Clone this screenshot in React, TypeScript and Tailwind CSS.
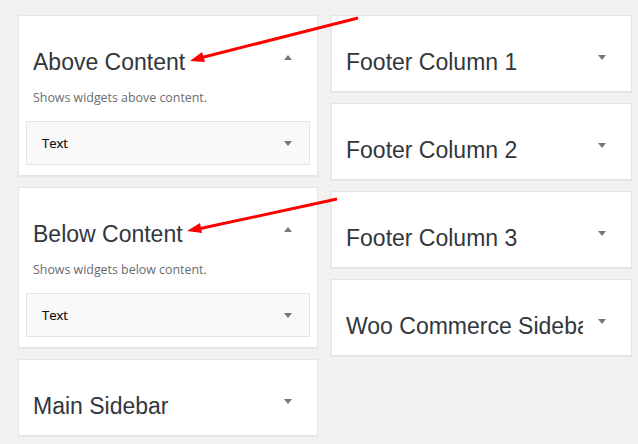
import React from 'react';

type Section = {
  title: string;
  open?: boolean;
  description?: string;
};

const leftSections: Section[] = [
  { title: 'Above Content', open: true, description: 'Shows widgets above content.' },
  { title: 'Below Content', open: true, description: 'Shows widgets below content.' },
  { title: 'Main Sidebar' },
];

const rightSections: Section[] = [
  { title: 'Footer Column 1' },
  { title: 'Footer Column 2' },
  { title: 'Footer Column 3' },
  { title: 'Woo Commerce Sidebar' },
];

const Caret = ({ up = false }: { up?: boolean }) => (
  <svg width="8" height="5" viewBox="0 0 8 5" className="block">
    {up ? <polygon points="0,5 8,5 4,0" fill="#72777c" /> : <polygon points="0,0 8,0 4,5" fill="#72777c" />}
  </svg>
);

const WidgetArea: React.FC<{ section: Section }> = ({ section }) => {
  const { title, open, description } = section;

  return (
    <div
      className={`bg-white border border-[#e5e5e5] shadow-[0_1px_1px_rgba(0,0,0,0.04)] ${
        open ? 'h-[161px]' : 'h-[77px]'
      }`}
    >
      {/* header */}
      <div className="relative pt-[32px] pl-[14px] pr-[48px]">
        <h3
          className="text-[23px] leading-[28px] text-[#32373c] whitespace-nowrap overflow-hidden"
          style={{ fontFamily: '"Liberation Sans", Arial, sans-serif' }}
        >
          {title}
        </h3>
        <span className="absolute right-[25px] top-[39px]">
          <Caret up={open} />
        </span>
      </div>

      {open && (
        <>
          <p
            className="mt-[12px] pl-[14px] text-[12.4px] leading-[20px] text-[#686c71]"
            style={{ fontFamily: '"Open Sans", "Noto Sans", sans-serif' }}
          >
            {description}
          </p>
          <div className="mx-[7px] mt-[13px] h-[44px] bg-[#f9f9f9] border border-[#e5e5e5] flex items-center justify-between pl-[15px] pr-[17px]">
            <span
              className="pt-[2px] text-[13px] font-medium text-[#111]"
              style={{ fontFamily: '"Open Sans", "Noto Sans", sans-serif', WebkitTextStroke: '0.2px #111' }}
            >
              Text
            </span>
            <Caret />
          </div>
        </>
      )}
    </div>
  );
};

export default function App() {
  return (
    <div className="relative w-[638px] h-[444px] overflow-hidden bg-[#f1f1f1]">
      <div className="flex gap-[13px] pl-[18px] pt-[15px]">
        <div className="w-[300px] flex flex-col gap-[11px]">
          {leftSections.map((s) => (
            <WidgetArea key={s.title} section={s} />
          ))}
        </div>
        <div className="w-[301px] flex flex-col gap-[11px]">
          {rightSections.map((s) => (
            <WidgetArea key={s.title} section={s} />
          ))}
        </div>
      </div>

      {/* annotation arrows */}
      <svg className="absolute inset-0 pointer-events-none" width="638" height="444">
        <line x1="358" y1="18" x2="200" y2="58" stroke="#f00" strokeWidth="3" />
        <polygon points="190,61 205,62 202,52" fill="#f00" />
        <line x1="337" y1="199" x2="198" y2="229" stroke="#f00" strokeWidth="3" />
        <polygon points="187,231 202,233 200,223" fill="#f00" />
      </svg>
    </div>
  );
}
